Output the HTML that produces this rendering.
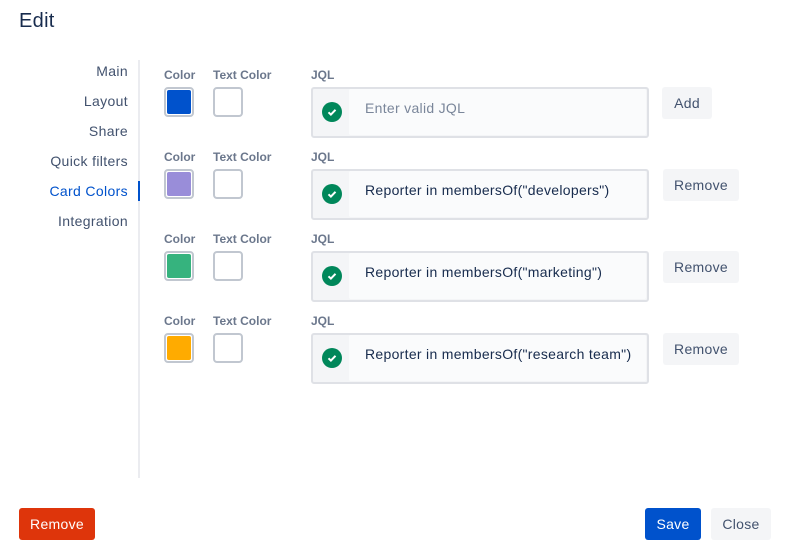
<!DOCTYPE html>
<html><head><meta charset="utf-8"><style>
*{box-sizing:border-box;margin:0;padding:0}
body{width:792px;height:560px;background:#fff;font-family:"Liberation Sans",sans-serif;color:#172b4d;position:relative;overflow:hidden}
.a{position:absolute}
h1{position:absolute;left:19px;top:10px;font-size:20px;font-weight:normal;color:#172b4d;letter-spacing:0.3px}
.nav{position:absolute;right:664px;font-size:14px;color:#42526e;text-align:right;white-space:nowrap;letter-spacing:0.35px}
.lbl{position:absolute;font-size:12px;font-weight:bold;color:#6b778c}
.sw{position:absolute;width:30px;height:30px;border:2px solid #c1c7d0;border-radius:4px;background:#fff}
.sw i{position:absolute;left:1px;top:1px;right:1px;bottom:1px;border-radius:2px}
.jql{position:absolute;left:311px;width:338px;height:51px;background:#f4f5f7;border:2px solid #dfe1e6;border-radius:3px}
.jql .ta{position:absolute;left:36px;top:0;right:1px;bottom:1px;background:#fafbfc;border-radius:2px;font-size:14px;color:#172b4d;padding:11px 0 0 16px;letter-spacing:0.3px}
.chk{position:absolute;left:9px;top:13px;width:20px;height:20px;border-radius:50%;background:#00875a}
.btn{position:absolute;height:32px;border-radius:3px;background:#f4f5f7;color:#42526e;font-size:14px;text-align:center;line-height:32px;letter-spacing:0.3px}
</style></head><body>
<h1>Edit</h1>
<div class="nav" style="top:63px">Main</div>
<div class="nav" style="top:93px">Layout</div>
<div class="nav" style="top:123px">Share</div>
<div class="nav" style="top:153px">Quick filters</div>
<div class="nav" style="top:183px;color:#0052cc">Card Colors</div>
<div class="nav" style="top:213px">Integration</div>
<div class="a" style="left:138px;top:60px;width:2px;height:418px;background:#ebecf0"></div>
<div class="a" style="left:138px;top:181px;width:2px;height:20px;background:#0052cc"></div>

<div class="lbl" style="left:164px;top:68px">Color</div><div class="lbl" style="left:213px;top:68px">Text Color</div><div class="lbl" style="left:311px;top:68px">JQL</div>
<div class="sw" style="left:164px;top:87px"><i style="background:#0052cc"></i></div><div class="sw" style="left:213px;top:87px"></div>
<div class="jql" style="top:87px"><div class="chk"><svg width="20" height="20"><path d="M6.5 10.3l2.4 2.3 4.6-4.8" stroke="#fff" stroke-width="2" fill="none"/></svg></div><div class="ta" style="color:#7a869a">Enter valid JQL</div></div>
<div class="btn" style="left:662px;top:87px;width:50px">Add</div>

<div class="lbl" style="left:164px;top:150px">Color</div><div class="lbl" style="left:213px;top:150px">Text Color</div><div class="lbl" style="left:311px;top:150px">JQL</div>
<div class="sw" style="left:164px;top:169px"><i style="background:#998dd9"></i></div><div class="sw" style="left:213px;top:169px"></div>
<div class="jql" style="top:169px"><div class="chk"><svg width="20" height="20"><path d="M6.5 10.3l2.4 2.3 4.6-4.8" stroke="#fff" stroke-width="2" fill="none"/></svg></div><div class="ta">Reporter in membersOf("developers")</div></div>
<div class="btn" style="left:663px;top:169px;width:76px">Remove</div>

<div class="lbl" style="left:164px;top:232px">Color</div><div class="lbl" style="left:213px;top:232px">Text Color</div><div class="lbl" style="left:311px;top:232px">JQL</div>
<div class="sw" style="left:164px;top:251px"><i style="background:#36b37e"></i></div><div class="sw" style="left:213px;top:251px"></div>
<div class="jql" style="top:251px"><div class="chk"><svg width="20" height="20"><path d="M6.5 10.3l2.4 2.3 4.6-4.8" stroke="#fff" stroke-width="2" fill="none"/></svg></div><div class="ta">Reporter in membersOf("marketing")</div></div>
<div class="btn" style="left:663px;top:251px;width:76px">Remove</div>

<div class="lbl" style="left:164px;top:314px">Color</div><div class="lbl" style="left:213px;top:314px">Text Color</div><div class="lbl" style="left:311px;top:314px">JQL</div>
<div class="sw" style="left:164px;top:333px"><i style="background:#ffab00"></i></div><div class="sw" style="left:213px;top:333px"></div>
<div class="jql" style="top:333px"><div class="chk"><svg width="20" height="20"><path d="M6.5 10.3l2.4 2.3 4.6-4.8" stroke="#fff" stroke-width="2" fill="none"/></svg></div><div class="ta">Reporter in membersOf("research team")</div></div>
<div class="btn" style="left:663px;top:333px;width:76px">Remove</div>

<div class="btn" style="left:19px;top:508px;width:76px;background:#de350b;color:#fff">Remove</div>
<div class="btn" style="left:645px;top:508px;width:56px;background:#0052cc;color:#fff">Save</div>
<div class="btn" style="left:711px;top:508px;width:60px">Close</div>
</body></html>
